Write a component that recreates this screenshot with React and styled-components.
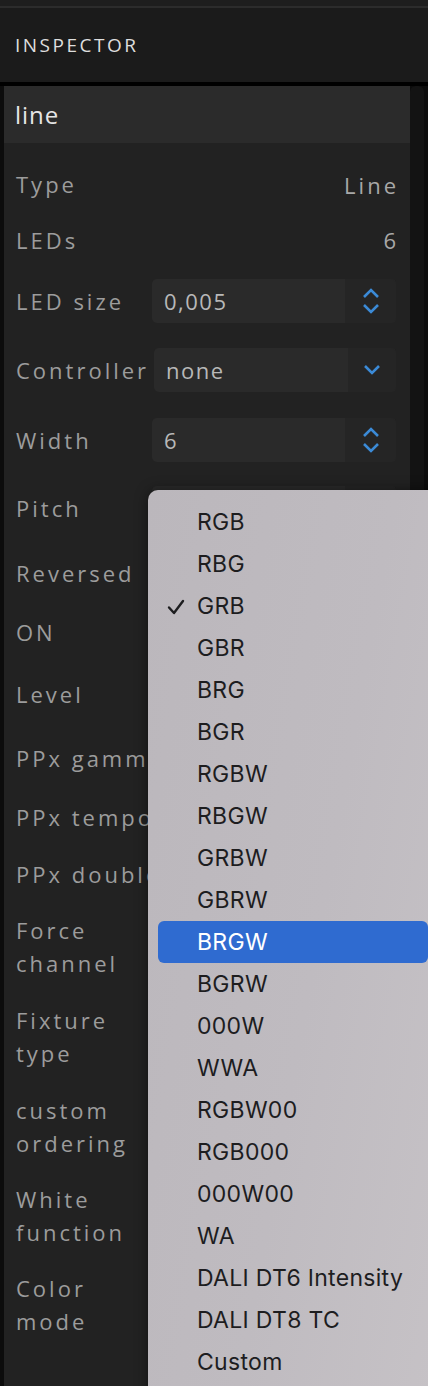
import styled, { createGlobalStyle } from "styled-components";

const Global = createGlobalStyle`
  html, body {
    margin: 0;
    padding: 0;
    background: #000;
    overflow: hidden;
  }
  * {
    box-sizing: border-box;
  }
`;

const rows = [
  { label: "Type", h: 55, value: "Line" },
  { label: "LEDs", h: 56, value: "6" },
  { label: "LED size", h: 66, spin: "0,005" },
  { label: "Controller", h: 72, select: "none" },
  { label: "Width", h: 68, spin: "6" },
  { label: "Pitch", h: 68, spin: "" },
  { label: "Reversed", h: 62 },
  { label: "ON", h: 56 },
  { label: "Level", h: 68 },
  { label: "PPx gamma", h: 60, nowrap: true },
  { label: "PPx temporal", h: 58, nowrap: true },
  { label: "PPx double", h: 56, nowrap: true },
  { label: "Force channel", h: 90 },
  { label: "Fixture type", h: 90 },
  { label: "custom ordering", h: 90 },
  { label: "White function", h: 88 },
  { label: "Color mode", h: 90 },
];

const orders = [
  "RGB", "RBG", "GRB", "GBR", "BRG", "BGR", "RGBW", "RBGW", "GRBW", "GBRW",
  "BRGW", "BGRW", "000W", "WWA", "RGBW00", "RGB000", "000W00", "WA",
  "DALI DT6 Intensity", "DALI DT8 TC", "Custom",
];

function Chevron({ up }) {
  return (
    <svg width="20" height="12" viewBox="0 0 20 12">
      <polyline
        points={up ? "3,10 10,3 17,10" : "3,2 10,9 17,2"}
        fill="none"
        stroke="#3b8ad6"
        strokeWidth="2.6"
      />
    </svg>
  );
}

function Check() {
  return (
    <svg width="18" height="16" viewBox="0 0 18 16">
      <polyline
        points="2,8.5 7,14 16,2"
        fill="none"
        stroke="#1d1d1f"
        strokeWidth="2.4"
        strokeLinejoin="round"
        strokeLinecap="round"
      />
    </svg>
  );
}

export default function App() {
  return (
    <Frame>
      <Global />
      <TopStrip />
      <Header>
        <HeaderTitle>INSPECTOR</HeaderTitle>
      </Header>
      <PanelArea>
        <Panel>
          <TitleBar>line</TitleBar>
          <Body>
            {rows.map((r) => (
              <Row key={r.label} $h={r.h}>
                <Label $nowrap={r.nowrap}>{r.label}</Label>
                {r.value && <Value>{r.value}</Value>}
                {r.spin !== undefined && (
                  <Field>
                    <FieldText>{r.spin}</FieldText>
                    <Spinner>
                      <Chevron up />
                      <Chevron />
                    </Spinner>
                  </Field>
                )}
                {r.select && (
                  <Field $shift>
                    <FieldText>{r.select}</FieldText>
                    <Spinner $wide>
                      <Chevron />
                    </Spinner>
                  </Field>
                )}
              </Row>
            ))}
          </Body>
        </Panel>
        <Scrollbar />
      </PanelArea>

      <Menu>
        {orders.map((o) => (
          <MenuItem key={o} $active={o === "BRGW"}>
            <CheckSlot>{o === "GRB" && <Check />}</CheckSlot>
            {o}
          </MenuItem>
        ))}
      </Menu>
    </Frame>
  );
}

const Frame = styled.div`
  position: relative;
  width: 428px;
  height: 1386px;
  overflow: hidden;
  background: #1b1b1b;
  font-family: "Open Sans", "Noto Sans", sans-serif;
`;

const TopStrip = styled.div`
  height: 8px;
  background: #1e1e1e;
  border-bottom: 2px solid #2c2c2c;
`;

const Header = styled.div`
  height: 74px;
  display: flex;
  align-items: center;
  padding-left: 15px;
  background: #1b1b1b;
`;

const HeaderTitle = styled.div`
  font-size: 19px;
  font-weight: 500;
  letter-spacing: 2.5px;
  color: #dedede;
`;

const PanelArea = styled.div`
  display: flex;
  align-items: stretch;
  border-top: 4px solid #000;
  padding-left: 4px;
  padding-right: 4px;
  background: #0c0c0c;
  height: 1310px;
`;

const Panel = styled.div`
  flex: 1;
  min-width: 0;
  background: #222222;
  overflow: hidden;
`;

const TitleBar = styled.div`
  height: 57px;
  display: flex;
  align-items: center;
  padding-left: 11px;
  background: #2b2b2b;
  color: #e6e6e6;
  font-size: 24px;
  font-weight: 500;
  letter-spacing: 1px;
`;

const Body = styled.div`
  padding: 14px 14px 0 12px;
`;

const Row = styled.div`
  height: ${(p) => p.$h}px;
  display: flex;
  align-items: center;
`;

const Label = styled.div`
  flex: 0 0 136px;
  font-size: 22px;
  line-height: 33px;
  letter-spacing: 3px;
  color: #9c9c9c;
  white-space: ${(p) => (p.$nowrap ? "nowrap" : "normal")};
`;

const Value = styled.div`
  margin-left: auto;
  font-size: 22px;
  letter-spacing: 3px;
  margin-right: -3px;
  color: #a8a8a8;
`;

const Field = styled.div`
  flex: 1;
  height: 44px;
  margin-left: ${(p) => (p.$shift ? "2px" : "0")};
  display: flex;
  border-radius: 5px;
  background: #2a2a2a;
  overflow: hidden;
`;

const FieldText = styled.div`
  flex: 1;
  display: flex;
  align-items: center;
  padding-left: 12px;
  font-size: 22px;
  letter-spacing: 1.5px;
  color: #b8b8b8;
`;

const Spinner = styled.div`
  flex: 0 0 ${(p) => (p.$wide ? 48 : 51)}px;
  display: flex;
  flex-direction: column;
  align-items: center;
  justify-content: center;
  gap: 4px;
  background: #252525;
`;

const Scrollbar = styled.div`
  flex: 0 0 14px;
  background: #131313;
  border-radius: 6px 6px 0 0;
`;

const Menu = styled.div`
  position: absolute;
  left: 148px;
  top: 490px;
  width: 290px;
  height: 920px;
  padding: 11px 10px;
  border-top-left-radius: 10px;
  background: linear-gradient(100deg, #bbb7bc 0%, #bfbbc0 55%, #c6c2c6 100%);
  box-shadow: 0 0 14px rgba(0, 0, 0, 0.45);
  font-family: Inter, "Liberation Sans", sans-serif;
`;

const MenuItem = styled.div`
  height: 42px;
  display: flex;
  align-items: center;
  border-radius: 6px;
  font-size: 23px;
  letter-spacing: 0.3px;
  color: ${(p) => (p.$active ? "#ffffff" : "#1d1d1f")};
  background: ${(p) => (p.$active ? "#2f6bd0" : "transparent")};
`;

const CheckSlot = styled.div`
  flex: 0 0 39px;
  display: flex;
  justify-content: flex-start;
  padding-left: 9px;
  padding-top: 2px;
`;
